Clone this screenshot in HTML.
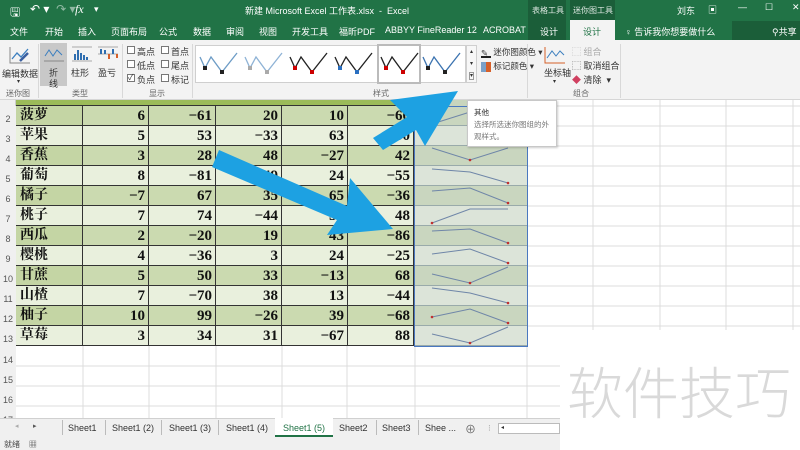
<!DOCTYPE html>
<html><head><meta charset="utf-8"><style>
*{margin:0;padding:0;box-sizing:border-box}
body{width:800px;height:450px;overflow:hidden;position:relative;background:#fff;font-family:"Liberation Sans","Noto Sans CJK SC",sans-serif;font-size:9px;color:#333}
.a{position:absolute;white-space:nowrap}
.tb{background:#217346;left:0;top:0;width:800px;height:40px}
.w{color:#fff}
.rib{left:0;top:40px;width:800px;height:60px;background:#f3f3f3;border-bottom:1px solid #d6d6d6}
.sep{position:absolute;top:44px;width:1px;height:54px;background:#d8d8d8}
.gl{color:#666;font-size:8px}
.cb{position:absolute;width:8px;height:8px;border:1px solid #777;background:#fff}
.cell{position:absolute;border-right:1px solid #333;border-bottom:1px solid #333;font-family:"Liberation Serif","Noto Serif CJK SC",serif;font-weight:bold;font-size:15px;color:#111;line-height:20px;text-align:right;padding-right:3px}
.nm{text-align:left;padding-left:4px;font-size:14px}
.rh{position:absolute;left:0;width:16px;font-size:9px;color:#555;text-align:center;line-height:26px;background:#f0f0f0}
</style></head><body>
<div class="a tb"></div>
<div class="a" style="left:528px;top:0;width:38px;height:40px;background:#1b5e39"></div>
<div class="a" style="left:570px;top:0;width:45px;height:20px;background:#1b5e39"></div>
<div class="a" style="left:570px;top:20px;width:45px;height:21px;background:#f3f3f3"></div>
<div class="a" style="left:732px;top:21px;width:68px;height:19px;background:#1b5e39"></div>
<div class="a w" style="left:10px;top:3px;font-size:12px">🖫</div>
<div class="a w" style="left:30px;top:2px;font-size:12px">↶ ▾ &nbsp;<span style="opacity:.5">↷ ▾</span></div>
<div class="a w" style="left:75px;top:2px;font-size:12px;font-family:'Liberation Serif',serif;font-style:italic">fx</div>
<div class="a w" style="left:94px;top:4px">▾</div>
<div class="a w" style="left:245px;top:4px">新建 Microsoft Excel 工作表.xlsx &nbsp;- &nbsp;Excel</div>
<div class="a w" style="left:532px;top:5px;font-size:8px;opacity:.85">表格工具</div>
<div class="a w" style="left:573px;top:5px;font-size:8px;opacity:.85">迷你图工具</div>
<div class="a w" style="left:677px;top:4px">刘东</div>
<div class="a w" style="left:708px;top:3px">▣</div>
<div class="a w" style="left:738px;top:2px">—</div>
<div class="a w" style="left:765px;top:2px">☐</div>
<div class="a w" style="left:792px;top:2px">✕</div>
<div class="a w" style="top:25px;left:10px">文件</div>
<div class="a w" style="top:25px;left:45px">开始</div>
<div class="a w" style="top:25px;left:78px">插入</div>
<div class="a w" style="top:25px;left:111px">页面布局</div>
<div class="a w" style="top:25px;left:159px">公式</div>
<div class="a w" style="top:25px;left:193px">数据</div>
<div class="a w" style="top:25px;left:226px">审阅</div>
<div class="a w" style="top:25px;left:259px">视图</div>
<div class="a w" style="top:25px;left:292px">开发工具</div>
<div class="a w" style="top:25px;left:339px">福昕PDF</div>
<div class="a w" style="top:25px;left:385px">ABBYY FineReader 12</div>
<div class="a w" style="top:25px;left:483px">ACROBAT</div>
<div class="a w" style="top:25px;left:540px">设计</div>
<div class="a" style="top:25px;left:583px;color:#217346">设计</div>
<div class="a w" style="top:25px;left:625px">♀ 告诉我你想要做什么</div>
<div class="a w" style="top:25px;left:772px">⚲共享</div>
<div class="a rib"></div>
<div class="sep" style="left:38px"></div><div class="sep" style="left:122px"></div><div class="sep" style="left:192px"></div><div class="sep" style="left:527px"></div><div class="sep" style="left:620px"></div>
<svg class="a" style="left:8px;top:45px" width="24" height="20"><path d="M2 2V18H22" stroke="#888" fill="none"/><path d="M4 14L9 8L13 12L20 4" stroke="#3c7fbf" fill="none" stroke-width="1.3"/><path d="M12 16L20 8" stroke="#3a5fa0" stroke-width="2.5"/></svg>
<div class="a" style="left:2px;top:67px">编辑数据</div><div class="a" style="left:17px;top:78px;font-size:6px">▾</div>
<div class="a gl" style="left:6px;top:88px">迷你图</div>
<div class="a" style="left:40px;top:43px;width:27px;height:43px;background:#c8c8c8"></div>
<svg class="a" style="left:43px;top:46px" width="22" height="16"><path d="M1 15H21" stroke="#888"/><path d="M2 10L6 4L10 10L14 4L19 9" stroke="#3c7fbf" fill="none"/></svg>
<div class="a" style="left:49px;top:66px">折</div><div class="a" style="left:49px;top:77px">线</div>
<svg class="a" style="left:71px;top:46px" width="22" height="16"><path d="M1 15H21M1 1H21" stroke="#aaa"/><path d="M4 14V8M7 14V4M10 14V7M13 14V9M16 14V11" stroke="#2f6eb0" stroke-width="2"/></svg>
<div class="a" style="left:71px;top:66px">柱形</div>
<svg class="a" style="left:97px;top:46px" width="22" height="16"><path d="M1 8H21M1 1H21" stroke="#aaa"/><path d="M4 8V3M8 8V4M16 8V3" stroke="#2f6eb0" stroke-width="2"/><path d="M12 8V13M20 8V12" stroke="#d6602a" stroke-width="2"/></svg>
<div class="a" style="left:98px;top:66px">盈亏</div>
<div class="a gl" style="left:72px;top:88px">类型</div>
<div class="cb" style="left:127px;top:46px"></div><div class="a" style="left:137px;top:45px">高点</div>
<div class="cb" style="left:161px;top:46px"></div><div class="a" style="left:171px;top:45px">首点</div>
<div class="cb" style="left:127px;top:60px"></div><div class="a" style="left:137px;top:59px">低点</div>
<div class="cb" style="left:161px;top:60px"></div><div class="a" style="left:171px;top:59px">尾点</div>
<div class="cb" style="left:127px;top:74px;font-size:8px;line-height:6px">✓</div><div class="a" style="left:137px;top:73px">负点</div>
<div class="cb" style="left:161px;top:74px"></div><div class="a" style="left:171px;top:73px">标记</div>
<div class="a gl" style="left:149px;top:88px">显示</div>
<div class="a" style="left:195px;top:45px;width:271px;height:38px;background:#fff;border:1px solid #cfcfcf"></div>
<div class="a" style="left:377px;top:44px;width:44px;height:40px;border:2px solid #bbb;background:#fff"></div>
<svg class="a" style="left:195px;top:45px" width="272" height="38">
<g fill="none" stroke-width="1.3">
<path d="M5 12L10 23L16 12L27 27L42 8" stroke="#6d9cc6"/>
<path d="M50 12L55 23L61 12L72 27L87 8" stroke="#8fb3d6"/>
<path d="M95 12L100 23L106 12L117 27L132 8" stroke="#222"/>
<path d="M140 12L145 23L151 12L162 27L177 8" stroke="#222"/>
<path d="M186 12L191 23L197 12L208 27L223 8" stroke="#222"/>
<path d="M228 12L233 23L239 12L250 27L265 8" stroke="#3b73b0"/>
</g>
<g><rect x="8" y="21" width="4" height="4" fill="#222"/><rect x="25" y="25" width="4" height="4" fill="#222"/>
<rect x="53" y="21" width="4" height="4" fill="#aaa"/><rect x="70" y="25" width="4" height="4" fill="#aaa"/>
<rect x="98" y="21" width="4" height="4" fill="#c00"/><rect x="115" y="25" width="4" height="4" fill="#c00"/>
<rect x="143" y="21" width="4" height="4" fill="#2a6fc0"/><rect x="160" y="25" width="4" height="4" fill="#2a6fc0"/>
<rect x="189" y="21" width="4" height="4" fill="#c00"/><rect x="206" y="25" width="4" height="4" fill="#c00"/>
<rect x="231" y="21" width="4" height="4" fill="#222"/><rect x="248" y="25" width="4" height="4" fill="#222"/></g>
</svg>
<div class="a" style="left:466px;top:45px;width:11px;height:38px;background:#f7f7f7;border:1px solid #cfcfcf;font-size:6px;text-align:center;line-height:12px">▴<br>▾<br><span style="border:1px solid #999">▾</span></div>
<div class="a gl" style="left:373px;top:88px">样式</div>
<div class="a" style="left:481px;top:46px;font-size:8.5px"><span style="display:inline-block;width:10px;height:10px;border-bottom:2px solid #222;vertical-align:middle">✎</span> 迷你图颜色 ▾</div>
<div class="a" style="left:481px;top:60px;font-size:8.5px"><span style="display:inline-block;width:10px;height:10px;vertical-align:middle;background:linear-gradient(90deg,#7aa0c8 50%,#d6602a 50%)"></span> 标记颜色 ▾</div>
<svg class="a" style="left:544px;top:46px" width="22" height="18"><path d="M1 1V17H21" stroke="#d6602a" fill="none"/><path d="M3 12L8 5L12 10L16 5L20 9" stroke="#3c7fbf" fill="none"/></svg>
<div class="a" style="left:544px;top:66px">坐标轴</div><div class="a" style="left:553px;top:78px;font-size:6px">▾</div>
<div class="a" style="left:572px;top:45px;color:#aaa">⬚ 组合</div>
<div class="a" style="left:572px;top:59px">⬚ 取消组合</div>
<div class="a" style="left:572px;top:73px"><span style="color:#d04060">◆</span> 清除 &nbsp;▾</div>
<div class="a gl" style="left:573px;top:88px">组合</div>

<div class="a" style="left:0;top:100px;width:16px;height:318px;background:#f0f0f0;border-right:1px solid #ccc"></div>
<div class="a" style="left:16px;top:100px;width:398px;height:6px;background:#9bbb59;border-bottom:1px solid #333"></div>
<div class="a" style="left:414px;top:100px;width:114px;height:6px;background:#c8d5bd"></div>
<svg class="a" style="left:16px;top:100px" width="784" height="318">
<g stroke="#dcdcdc" stroke-width="1">
<path d="M577 0V230M644 0V230M710 0V230M777 0V230"/>
<path d="M512 6H784M512 26H784M512 46H784M512 66H784M512 86H784M512 106H784M512 126H784M512 146H784M512 166H784M512 186H784M512 206H784M512 226H784"/>
<path d="M0 266H544M0 286H544M0 306H544M67 246V318M133 246V318M200 246V318M266 246V318M331 246V318M399 246V318M511 246V318"/>
</g></svg>
<div id="rows"></div>
<script>
var names=["菠萝","苹果","香蕉","葡萄","橘子","桃子","西瓜","樱桃","甘蔗","山楂","柚子","草莓"];
var v=[[6,-61,20,10,-60],[5,53,-33,63,-30],[3,28,48,-27,42],[8,-81,49,24,-55],[-7,67,35,65,-36],[7,74,-44,54,48],[2,-20,19,43,-86],[4,-36,3,24,-25],[5,50,33,-13,68],[7,-70,38,13,-44],[10,99,-26,39,-68],[3,34,31,-67,88]];
var xs=[16,83,149,216,282,348,414,528],h="";
for(var r=0;r<12;r++){var y=106+r*20,d=r%2==0;
h+='<div class="rh" style="top:'+y+'px;height:20px">'+(r+2)+'</div>';
for(var c=0;c<7;c++){var bg=c==6?(d?"#c9d6bf":"#dce4d9"):(d?(c==0?"#c4d5a4":"#cbdab0"):"#e9f0dd");
var t=c==0?names[r]:c<6?String(v[r][c-1]).replace("-","−"):"";
h+='<div class="cell'+(c==0?' nm':'')+'" style="left:'+xs[c]+'px;top:'+y+'px;width:'+(xs[c+1]-xs[c])+'px;height:20px;background:'+bg+(c==6?';border-right:none;border-bottom-color:#9aa':'')+'">'+t+'</div>';}}
for(var r=14;r<=17;r++)h+='<div class="rh" style="top:'+(346+(r-14)*20)+'px;height:20px;line-height:28px">'+r+'</div>';
document.getElementById("rows").innerHTML=h;
</script>
<div class="a" style="left:414px;top:106px;width:114px;height:241px;border:1.5px solid #4a78c0"></div>
<svg class="a" style="left:414px;top:106px" width="114" height="240"><g fill="none" stroke="#6f86a8" stroke-width="1">
<path d="M18 18L56 6L94 1"/><path d="M18 42L56 54L94 42"/><path d="M18 63L56 66L94 77"/><path d="M18 85L56 82L94 97"/>
<path d="M18 117L56 103L94 103"/><path d="M18 125L56 123L94 137"/><path d="M18 148L56 143L94 157"/><path d="M18 168L56 177L94 161"/>
<path d="M18 182L56 187L94 197"/><path d="M18 211L56 203L94 217"/><path d="M18 228L56 237L94 221"/></g>
<g fill="#c03030"><circle cx="18" cy="18" r="1.3"/><circle cx="56" cy="54" r="1.3"/><circle cx="94" cy="77" r="1.3"/><circle cx="94" cy="97" r="1.3"/><circle cx="18" cy="117" r="1.3"/><circle cx="94" cy="137" r="1.3"/><circle cx="94" cy="157" r="1.3"/><circle cx="56" cy="177" r="1.3"/><circle cx="94" cy="197" r="1.3"/><circle cx="18" cy="211" r="1.3"/><circle cx="94" cy="217" r="1.3"/><circle cx="56" cy="237" r="1.3"/></g></svg>
<div class="a" style="left:467px;top:100px;width:90px;height:47px;background:#fff;border:1px solid #c8c8c8;box-shadow:1px 1px 2px rgba(0,0,0,.2);padding:6px 6px;font-size:7.5px;color:#444;white-space:normal;line-height:12px"><span style="color:#333">其他</span><br><span style="color:#777">选择所选迷你图组的外观样式。</span></div>
<svg class="a" style="left:0;top:0" width="800" height="450"><g fill="#1da1e2">
<polygon points="373,138 383,150 416,130 425,146 458,91 390,100 407,117"/>
<polygon points="219,150 212,167 337,220 327,235 393,229 350,178 347,206"/></g></svg>
<div class="a" style="left:0;top:418px;width:560px;height:19px;background:#f0f0f0;border-top:1px solid #d0d0d0"></div>
<div class="a" style="left:15px;top:422px;color:#aaa;font-size:7px">◂</div><div class="a" style="left:33px;top:422px;color:#555;font-size:7px">▸</div>
<div class="a" style="left:62px;top:420px;height:15px;border-left:1px solid #bbb"></div>
<div class="a" style="left:68px;top:423px">Sheet1</div>
<div class="a" style="left:105px;top:420px;height:15px;border-left:1px solid #bbb"></div>
<div class="a" style="left:112px;top:423px">Sheet1 (2)</div>
<div class="a" style="left:161px;top:420px;height:15px;border-left:1px solid #bbb"></div>
<div class="a" style="left:169px;top:423px">Sheet1 (3)</div>
<div class="a" style="left:218px;top:420px;height:15px;border-left:1px solid #bbb"></div>
<div class="a" style="left:226px;top:423px">Sheet1 (4)</div>
<div class="a" style="left:275px;top:418px;width:58px;height:19px;background:#fff;border-bottom:2px solid #217346;color:#217346;padding:5px 0 0 8px">Sheet1 (5)</div>
<div class="a" style="left:339px;top:423px">Sheet2</div>
<div class="a" style="left:376px;top:420px;height:15px;border-left:1px solid #bbb"></div>
<div class="a" style="left:382px;top:423px">Sheet3</div>
<div class="a" style="left:418px;top:420px;height:15px;border-left:1px solid #bbb"></div>
<div class="a" style="left:425px;top:423px">Shee ...</div>
<div class="a" style="left:465px;top:421px;font-size:11px;color:#666">⊕</div>
<div class="a" style="left:488px;top:423px;color:#aaa">⁝</div>
<div class="a" style="left:498px;top:423px;width:62px;height:11px;background:#fff;border:1px solid #bbb;font-size:6px;padding-left:2px">◂</div>
<div class="a" style="left:0;top:437px;width:560px;height:13px;background:#f0f0f0"></div>
<div class="a" style="left:4px;top:439px;font-size:8px;color:#444">就绪 &nbsp;&nbsp;&nbsp;▦</div>
<div class="a" style="left:567px;top:350px;font-size:56px;color:#d9d9d9;font-family:'Noto Sans CJK SC',sans-serif;font-weight:300;letter-spacing:0">软件技巧</div>
</body></html>
